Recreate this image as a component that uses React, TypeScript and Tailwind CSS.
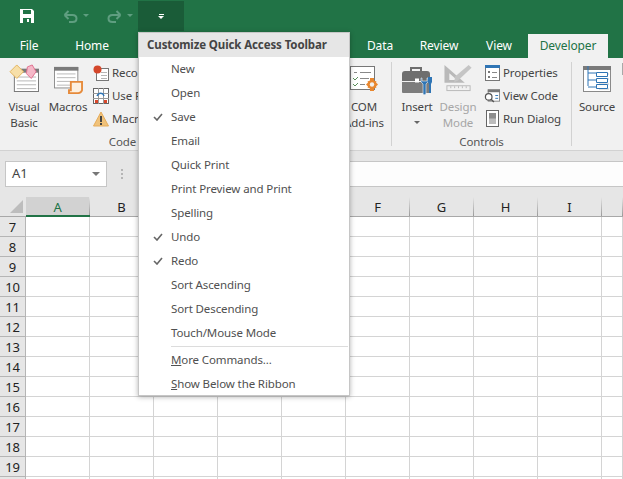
import type { ReactNode } from "react";

const menuItems = [
  { label: "New" },
  { label: "Open" },
  { label: "Save", checked: true },
  { label: "Email" },
  { label: "Quick Print" },
  { label: "Print Preview and Print" },
  { label: "Spelling" },
  { label: "Undo", checked: true },
  { label: "Redo", checked: true },
  { label: "Sort Ascending" },
  { label: "Sort Descending" },
  { label: "Touch/Mouse Mode" },
];

const columns = ["A", "B", "C", "D", "E", "F", "G", "H", "I", ""];
const rows = ["7", "8", "9", "10", "11", "12", "13", "14", "15", "16", "17", "18", "19", ""];

const SheetLines = ({ x, y, w, n, gap = 4 }: { x: number; y: number; w: number; n: number; gap?: number }) => (
  <g stroke="#b5b5b5" strokeWidth="1">
    {Array.from({ length: n }).map((_, i) => (
      <path key={i} d={`M${x} ${y + i * gap + 0.5}h${w}`} />
    ))}
  </g>
);

const VisualBasicIcon = () => (
  <svg width="31" height="28" viewBox="0 0 32 29" className="mb-[3px]">
    <rect x="5.5" y="5.5" width="25" height="23" fill="#fff" stroke="#777" />
    <path d="M5 5h26v4H5z" fill="#7a7a7a" />
    <SheetLines x={8} y={13} w={20} n={4} />
    <path d="M8 1 15 8 8 15 1 8Z" fill="#f7dfa8" stroke="#e3b35c" />
    <path d="M19 3 24 1 28 8 23 15 18 10Z" fill="#f5b8c8" stroke="#e0708f" />
  </svg>
);

const MacrosIcon = () => (
  <svg width="31" height="28" viewBox="0 0 33 30" className="mb-px">
    <rect x="1.5" y="1.5" width="25" height="22" fill="#fff" stroke="#8a8a8a" />
    <path d="M1 1h26v4H1z" fill="#7a7a7a" />
    <SheetLines x={4} y={8} w={20} n={4} />
    <path d="M19 17h12v9q-1 3-4 3H17v-3h2Z" fill="#fdf0e0" stroke="#e68a3a" strokeWidth="2" />
  </svg>
);

const RecordIcon = () => (
  <svg width="16" height="16" viewBox="0 0 16 16">
    <rect x="3.5" y="3.5" width="12" height="12" fill="#fff" stroke="#777" />
    <SheetLines x={8} y={7} w={6} n={3} gap={3} />
    <circle cx="4.5" cy="4.5" r="4" fill="#d4472b" />
  </svg>
);

const RelativeIcon = () => (
  <svg width="16" height="16" viewBox="0 0 16 16">
    <rect x="0.5" y="0.5" width="15" height="15" fill="#fff" stroke="#666" />
    <path d="M5.5 0v16M10.5 0v16M0 5.5h16M0 10.5h16" stroke="#999" />
    <path d="M4 8q2-4 6-2l1 2" fill="none" stroke="#2f75b5" strokeWidth="1.5" />
    <path d="M2 12h3v3H2zM11 12h3v3h-3z" fill="#d9472b" />
  </svg>
);

const WarningIcon = () => (
  <svg width="16" height="16" viewBox="0 0 16 16">
    <path d="M8 1 15.5 15H.5Z" fill="#f0c27a" stroke="#e6ac5a" />
    <path d="M7 5h2v6H7zM7 12h2v2H7z" fill="#444" />
  </svg>
);

const ComIcon = () => (
  <svg width="29" height="30" viewBox="0 0 29 30">
    <rect x="0.5" y="1.5" width="24" height="23" fill="#fff" stroke="#777" />
    <path d="M4 7.5h3M10 7.5h11M10 13.5h9M10 19.5h5" stroke="#888" />
    <path d="M3 13l2 2 3-3M3 19l2 2 3-3" fill="none" stroke="#5a8f5a" />
    <path d="M20 13h4v2.5l2.5 1-.5 1 2 2-2 2 .5 1-2.500 1V26h-4v-2.500l-2.500-1 .5-1-2-2 2-2-.5-1 2.500-1Z" fill="#e8872f" />
    <circle cx="22" cy="19.500" r="2.200" fill="#f1f1f1" />
  </svg>
);

const InsertIcon = () => (
  <svg width="31" height="30" viewBox="0 0 31 30" className="-mb-px">
    <path d="M9 5V2h10v3" fill="none" stroke="#6e6e6e" strokeWidth="2" />
    <path d="M0 8q0-3 3-3h22q3 0 3 3v7H0z" fill="#6e6e6e" />
    <path d="M0 16h28v10q0 1-1 1H1q-1 0-1-1z" fill="#7d7d7d" />
    <rect x="13" y="12.500" width="4" height="4" fill="#fff" />
    <path d="M19 12v4l2 2v10q1 1.500 3 0V18l2-2v-4l-1 0v3h-5v-3Z" fill="#2f75b5" stroke="#f1f1f1" strokeWidth=".6" />
    <path d="M26 11h4v5l-1 2v9h-2v-9l-1-2Z" fill="#2f75b5" />
  </svg>
);

const DesignIcon = () => (
  <svg width="31" height="29" viewBox="0 0 31 30" className="mb-[2px]">
    <path d="M1 1 22 19.500H1Z M6 9.500v7h8Z" fill="#b9b9b9" fillRule="evenodd" />
    <path d="M12 13 26 1l3 3-14 13-4 2Z" fill="#c5c5c5" />
    <rect x="3.500" y="22.500" width="24" height="5" fill="#f1f1f1" stroke="#b9b9b9" />
    <path d="M7.500 23v2M11.500 23v2M15.500 23v2M19.500 23v2M23.500 23v2" stroke="#b9b9b9" />
  </svg>
);

const PropertiesIcon = () => (
  <svg width="15" height="16" viewBox="0 0 15 16">
    <rect x="0.500" y="0.500" width="14" height="15" fill="#fff" stroke="#777" />
    <path d="M0 0h15v3H0z" fill="#2f75b5" />
    <path d="M3 6h2v2H3zM3 11h2v2H3z" fill="#777" />
    <path d="M7 7.500h5M7 12.500h5" stroke="#888" />
  </svg>
);

const ViewCodeIcon = () => (
  <svg width="17" height="16" viewBox="0 0 17 16">
    <rect x="4.500" y="1.500" width="12" height="12" fill="#fff" stroke="#888" />
    <path d="M4 1h13v3H4z" fill="#777" />
    <path d="M12 7.500h3M12 10.500h3" stroke="#2f75b5" />
    <circle cx="5" cy="9" r="3.500" fill="#fff" stroke="#555" strokeWidth="1.300" />
    <path d="M7.500 11.500l3 3" stroke="#555" strokeWidth="1.500" />
  </svg>
);

const RunDialogIcon = () => (
  <svg width="15" height="17" viewBox="0 0 15 17">
    <rect x="1.500" y="0.500" width="12" height="16" fill="#fff" stroke="#666" />
    <rect x="4" y="3" width="7" height="11" fill="#bcbcbc" />
    <path d="M4 8.500h7V3H4z" fill="#8d8d8d" />
  </svg>
);

const SourceIcon = () => (
  <svg width="28" height="26" viewBox="0 0 28 26" className="mb-[3px]">
    <rect x="0.500" y="0.500" width="27" height="25" fill="#fff" stroke="#8a8a8a" />
    <path d="M0 0h28v4H0z" fill="#7a7a7a" />
    <path d="M16 8h10M16 13h10M16 18h10M16 23h10" stroke="#c8c8c8" />
    <path d="M5 0v20M5 7h8M5 14h8M5 21h8" stroke="#2f75b5" fill="none" />
    <path d="M13.500 6.500h11v4h-11zM13.500 12.500h11v4h-11zM13.500 18.500h11v4h-11z" fill="#fff" stroke="#2f75b5" />
  </svg>
);

const BigButton = ({ width, icon, lines, disabled, caret }: { width: string; icon?: ReactNode; lines: string[]; disabled?: boolean; caret?: boolean }) => (
  <div className={`${width} shrink-0 flex flex-col items-center leading-4 ${disabled ? "text-[#a6a6a6]" : "text-[#444]"}`}>
    <div className="h-[37px] flex items-end justify-center pb-[4px]">{icon}</div>
    {lines.map((l) => (
      <span key={l} className="whitespace-nowrap">{l}</span>
    ))}
    {caret && <span className="mt-[6px] border-x-[3px] border-t-[3px] border-x-transparent border-t-[#666]" />}
  </div>
);

const SmallButton = ({ icon, label }: { icon: ReactNode; label: string }) => (
  <div className="h-[23px] flex items-center gap-[3px] whitespace-nowrap text-[#444]">
    <span className="w-[16px] flex justify-center shrink-0">{icon}</span>
    {label}
  </div>
);

const RibbonGroup = ({ width, label, children }: { width: string; label?: string; children: ReactNode }) => (
  <div className={`${width} shrink-0 h-[88px] flex flex-col`}>
    <div className="h-[72px] flex">{children}</div>
    <div className="h-[16px] leading-4 text-center text-[#555]">{label}</div>
  </div>
);

const Divider = () => <div className="w-px h-[84px] shrink-0 bg-[#d2d2d2]" />;

const App = () => {
  return (
    <div
      className="relative w-[623px] h-[479px] overflow-hidden bg-[#e6e6e6] text-[11.5px] tracking-[-0.01em]"
      style={{ fontFamily: '"Noto Sans", sans-serif' }}
    >
      {/* title bar */}
      <div className="h-[31px] bg-[#217346] flex items-start">
        <div className="w-[54px] h-[31px] flex items-center pl-[20px]">
          <svg width="14" height="14" viewBox="0 0 14 14">
            <path d="M0 0h12l2 2v12H0z M3 1v4h8V1z M3 9v5h8V9z M7 10h2v3H7z" fill="#fff" fillRule="evenodd" />
          </svg>
        </div>
        <div className="w-[44px] h-[31px] flex items-center pl-[9px] gap-[5px]">
          <svg width="15" height="14" viewBox="0 0 15 14">
            <path d="M1.500 6h8q4 0 4 3.500T9.500 13H6M1.500 6l4-4M1.500 6l4 4" fill="none" stroke="#5f9e80" strokeWidth="2" />
          </svg>
          <span className="border-x-[3px] border-t-[3px] border-x-transparent border-t-[#5f9e80]" />
        </div>
        <div className="w-[40px] h-[31px] flex items-center pl-[9px] gap-[5px]">
          <svg width="15" height="14" viewBox="0 0 15 14">
            <path d="M13.500 6h-8q-4 0-4 3.500T5.500 13H9M13.500 6l-4-4M13.500 6l-4 4" fill="none" stroke="#5f9e80" strokeWidth="2" />
          </svg>
          <span className="border-x-[3px] border-t-[3px] border-x-transparent border-t-[#5f9e80]" />
        </div>
        <div className="w-[46px] h-[30px] mt-px bg-[#1a5c38] flex flex-col items-center justify-center gap-px">
          <span className="w-[5px] h-px bg-white" />
          <span className="border-x-[3px] border-t-[3px] border-x-transparent border-t-white" />
        </div>
      </div>

      {/* tabs */}
      <div className="h-[27px] bg-[#217346] flex items-end text-white text-[12px]">
        <div className="w-[58px] h-[24px] flex items-center justify-center">File</div>
        <div className="w-[68px] h-[24px] flex items-center justify-center">Home</div>
        <div className="w-[226px] h-[24px]" />
        <div className="w-[56px] h-[24px] flex items-center justify-center">Data</div>
        <div className="w-[62px] h-[24px] flex items-center justify-center">Review</div>
        <div className="w-[58px] h-[24px] flex items-center justify-center">View</div>
        <div className="w-[80px] h-[24px] flex items-center justify-center bg-[#f1f1f1] text-[#217346]">Developer</div>
      </div>

      {/* ribbon */}
      <div className="h-[93px] bg-[#f1f1f1] border-b border-[#d2d2d2] flex items-start pt-[4px] overflow-hidden">
        <RibbonGroup width="w-[245px]" label="Code">
          <div className="w-[2px]" />
          <BigButton width="w-[44px]" icon={<VisualBasicIcon />} lines={["Visual", "Basic"]} />
          <BigButton width="w-[44px]" icon={<MacrosIcon />} lines={["Macros"]} />
          <div className="ml-[3px] -mt-px w-[45px] overflow-hidden">
            <SmallButton icon={<RecordIcon />} label="Record Macro" />
            <SmallButton icon={<RelativeIcon />} label="Use Relative References" />
            <SmallButton icon={<WarningIcon />} label="Macro Security" />
          </div>
        </RibbonGroup>
        <Divider />
        <RibbonGroup width="w-[145px]">
          <div className="w-[104px]" />
          <div className="w-[38px] overflow-hidden flex justify-end">
            <BigButton width="w-[48px]" icon={<ComIcon />} lines={["COM", "Add-ins"]} />
          </div>
        </RibbonGroup>
        <Divider />
        <RibbonGroup width="w-[179px]" label="Controls">
          <div className="w-[3px]" />
          <BigButton width="w-[44px]" icon={<InsertIcon />} lines={["Insert"]} caret />
          <BigButton width="w-[38px]" icon={<DesignIcon />} lines={["Design", "Mode"]} disabled />
          <div className="ml-[7px] -mt-px">
            <SmallButton icon={<PropertiesIcon />} label="Properties" />
            <SmallButton icon={<ViewCodeIcon />} label="View Code" />
            <SmallButton icon={<RunDialogIcon />} label="Run Dialog" />
          </div>
        </RibbonGroup>
        <Divider />
        <RibbonGroup width="w-[50px]">
          <BigButton width="w-[50px]" icon={<SourceIcon />} lines={["Source"]} />
        </RibbonGroup>
        <div className="w-px h-[12px] mt-px bg-[#a8a8a8]" />
      </div>

      {/* name box and formula bar */}
      <div className="h-[46px] flex items-start pt-[10px]">
        <div className="ml-[5px] w-[102px] h-[26px] bg-white border border-[#c6c6c6] flex items-center justify-between px-[6px] text-[13px] text-[#444]">
          A1
          <span className="border-x-[4px] border-t-[4px] border-x-transparent border-t-[#777]" />
        </div>
        <div className="ml-[14px] mt-[8px] flex flex-col gap-[2px]">
          <span className="w-[2px] h-[2px] bg-[#b5b5b5]" />
          <span className="w-[2px] h-[2px] bg-[#b5b5b5]" />
          <span className="w-[2px] h-[2px] bg-[#b5b5b5]" />
        </div>
        <div className="ml-[15px] flex-1 h-[26px] bg-[#fdfdfd] border-y border-[#c6c6c6]" />
      </div>

      {/* sheet */}
      <div className="grid grid-cols-[26px_repeat(9,64px)_21px] auto-rows-[20px] bg-white text-[13px] text-[#222]">
        <div className="bg-[#e6e6e6] border-b border-[#a8a8a8] flex items-center justify-end pr-[3px]">
          <svg width="13" height="13" viewBox="0 0 13 13">
            <path d="M13 0v13H0Z" fill="#bdbdbd" />
          </svg>
        </div>
        {columns.map((c, i) => (
          <div
            key={i}
            className={`flex border-b ${i === 0 ? "bg-[#d2d2d2] border-b-2 border-[#217346] text-[#217346]" : "bg-[#e6e6e6] border-[#a8a8a8]"}`}
          >
            <span className="flex-1 text-center leading-[20px]">{c}</span>
            <span className="w-px bg-gradient-to-b from-[#e6e6e6] to-[#9a9a9a]" />
          </div>
        ))}
        {rows.map((r, n) => (
          <div key={n} className="contents">
            <div className="bg-[#e6e6e6] border-r border-b border-[#b5b5b5] text-center leading-[20px]">{r}</div>
            {columns.map((_, i) => (
              <div key={i} className="bg-white border-r border-b border-[#d4d4d4]" />
            ))}
          </div>
        ))}
      </div>

      {/* quick access dropdown */}
      <div className="absolute left-[138px] top-[32px] w-[212px] h-[364px] bg-white border border-[#c6c6c6] shadow-[0_1px_5px_rgba(0,0,0,0.3)] text-[#505050]">
        <div className="h-[24px] bg-[#e6e6e6] pl-[8px] flex items-center font-bold text-[#444] whitespace-nowrap">
          Customize Quick Access Toolbar
        </div>
        {menuItems.map((item) => (
          <div key={item.label} className="h-[24px] flex items-center">
            <span className="w-[32px] flex justify-center pl-[5px] shrink-0">
              {item.checked && (
                <svg width="10" height="8" viewBox="0 0 10 8">
                  <path d="M1 4l3 3 5-6" fill="none" stroke="#666" strokeWidth="1.600" />
                </svg>
              )}
            </span>
            {item.label}
          </div>
        ))}
        <div className="ml-[32px] mr-px h-px bg-[#dcdcdc] my-px" />
        <div className="h-[24px] flex items-center pl-[32px]">
          <span><span className="underline">M</span>ore Commands...</span>
        </div>
        <div className="h-[24px] flex items-center pl-[32px]">
          <span><span className="underline">S</span>how Below the Ribbon</span>
        </div>
      </div>
    </div>
  );
};

export default App;
